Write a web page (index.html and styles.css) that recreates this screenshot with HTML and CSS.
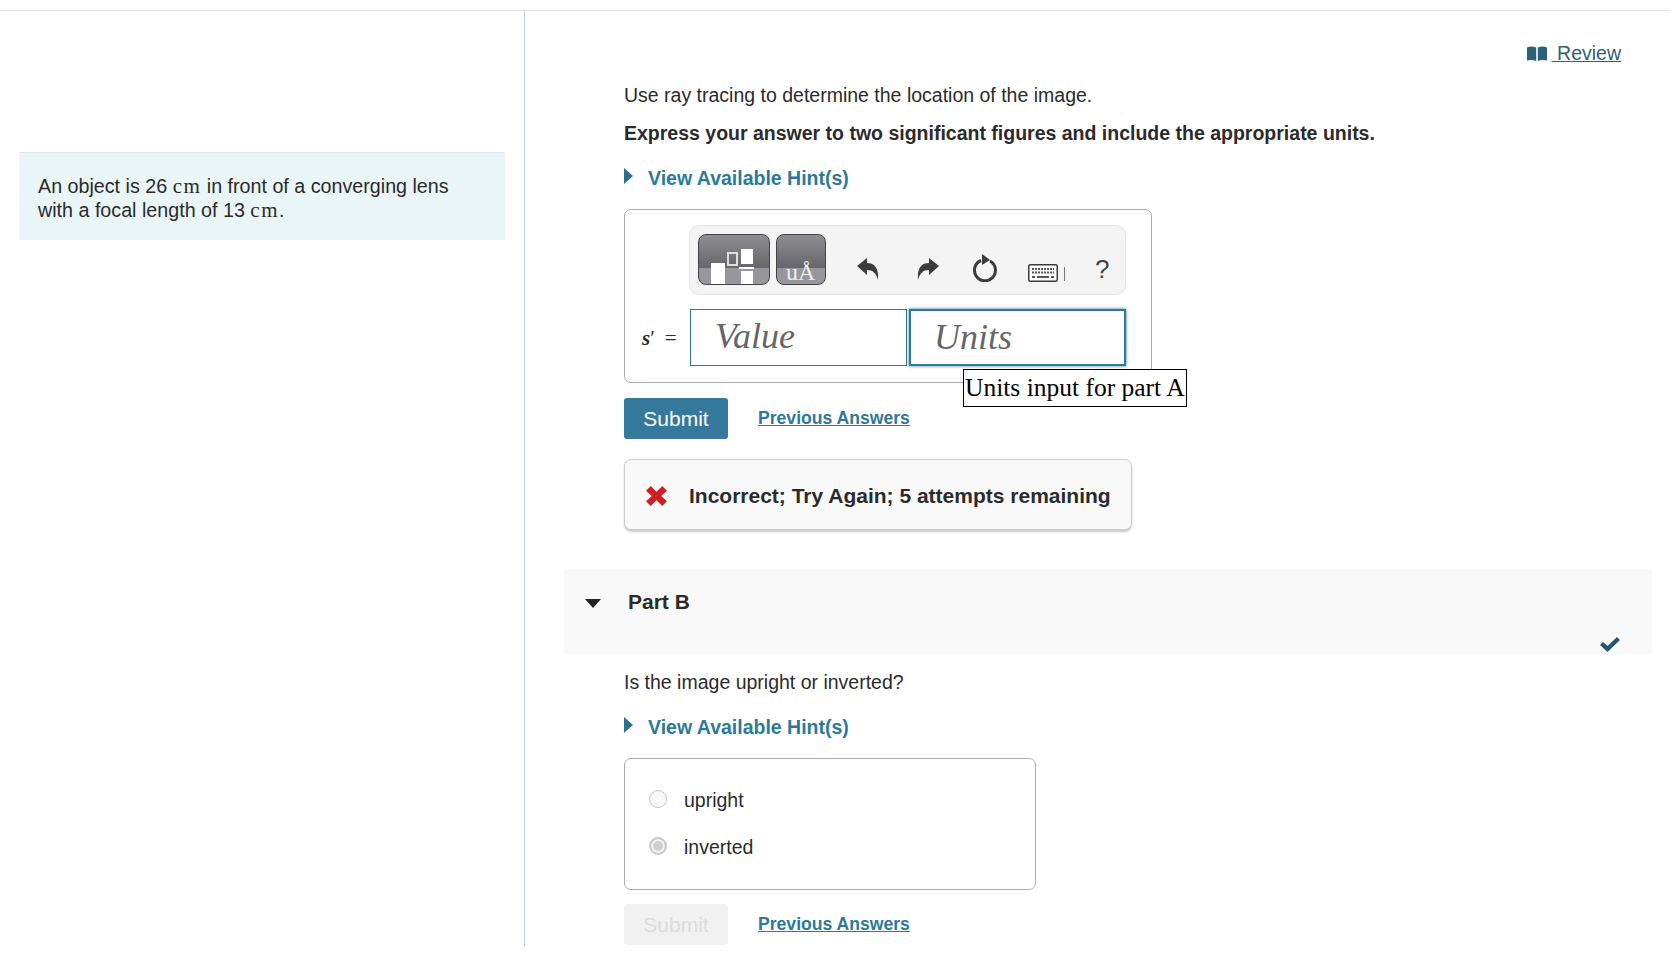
FILE: index.html
```html
<!DOCTYPE html>
<html lang="en">
<head>
    <meta charset="UTF-8">
    <title>Part A</title>
    <link rel="stylesheet" href="styles.css">
</head>
<body>
    <div class="layout">
        <aside class="side">
            <div class="intro">
                An object is 26 <span class="math">cm</span> in front of a converging lens<br>
                with a focal length of 13 <span class="math">cm</span>.
            </div>
        </aside>

        <main class="main">
            <div class="review-row">
                <a class="review" href="#">
                    <svg class="book" width="20" height="15" viewBox="0 0 20 15">
                        <path d="M0 1.5C3 .3 6 .3 9.2 1.5V15C6 13.6 3 13.6 0 14.5Z" fill="#2c6179"/>
                        <path d="M20 1.5C17 .3 14 .3 10.8 1.5V15C14 13.6 17 13.6 20 14.5Z" fill="#2c6179"/>
                    </svg>
                    <span class="review-text"> Review</span>
                </a>
            </div>

            <section class="part">
                <p class="line">Use ray tracing to determine the location of the image.</p>
                <p class="line bold">Express your answer to two significant figures and include the appropriate units.</p>
                <a class="hint" href="#"><span class="caret"></span>View Available Hint(s)</a>

                <div class="answer-box">
                    <div class="toolbar">
                        <span class="tool-btn tool-wide">
                            <svg width="72" height="50" viewBox="0 0 72 50">
                                <rect x="12" y="28" width="14" height="22" fill="#fff"/>
                                <rect x="29" y="18" width="9" height="12" fill="none" stroke="#ddd" stroke-width="2"/>
                                <rect x="42" y="14" width="12" height="15" fill="#fff"/>
                                <rect x="40" y="32" width="15" height="2" fill="#fff"/>
                                <rect x="42" y="36" width="12" height="14" fill="#fff"/>
                            </svg>
                        </span>
                        <span class="tool-btn tool-unit">
                            <span class="unit-text">uÅ</span>
                        </span>
                        <svg class="tool-icon undo" width="22" height="24" viewBox="0 0 22 24">
                            <path d="M0 9 10 1V6C17 6 22 10 21 23 19 16 16 13 10 13V18Z" fill="#3c3c3c"/>
                        </svg>
                        <svg class="tool-icon redo" width="22" height="24" viewBox="0 0 22 24">
                            <path d="M22 9 12 1V6C5 6 0 10 1 23 3 16 6 13 12 13V18Z" fill="#3c3c3c"/>
                        </svg>
                        <svg class="tool-icon reset" width="26" height="28" viewBox="0 0 26 28">
                            <path d="M9 6.5A10.5 10.5 0 1 0 18 7" fill="none" stroke="#3c3c3c" stroke-width="3"/>
                            <path d="M10 0 18 6 10 11Z" fill="#3c3c3c"/>
                        </svg>
                        <svg class="tool-icon keys" width="30" height="18" viewBox="0 0 30 18">
                            <rect x=".75" y=".75" width="28.5" height="16.5" rx="1.5" fill="#fff" stroke="#3c3c3c" stroke-width="1.5"/>
                            <path d="M4 5H26M4 8.5H26" stroke="#555" stroke-width="2" stroke-dasharray="2 1"/>
                            <path d="M4 13H7M9 13H21M23 13H26" stroke="#555" stroke-width="2"/>
                        </svg>
                        <span class="tool-sep"></span>
                        <span class="tool-help">?</span>
                    </div>

                    <div class="input-row">
                        <span class="eq-label"><i>s</i>′<span class="eq-sign">=</span></span>
                        <div class="field">Value</div>
                        <div class="field field-focus">Units</div>
                    </div>
                    <div class="tooltip">Units input for part A</div>
                </div>

                <div class="actions">
                    <button class="submit">Submit</button>
                    <a class="prev" href="#">Previous Answers</a>
                </div>

                <div class="feedback">
                    <svg width="21" height="20" viewBox="0 0 22 21">
                        <path d="M5 0 11 6 17 0 22 5 16 10.500 22 16 17 21 11 15 5 21 0 16 6 10.500 0 5Z" fill="#cd2026"/>
                    </svg>
                    <span>Incorrect; Try Again; 5 attempts remaining</span>
                </div>
            </section>

            <div class="part-head">
                <span class="arrow-down"></span>
                <span class="part-title">Part B</span>
                <svg class="check" width="20" height="15" viewBox="0 0 20 15">
                    <path d="M0 8 3 5 7.500 9 17 0 20 3 7.500 15Z" fill="#22576e"/>
                </svg>
            </div>

            <section class="part">
                <p class="line question">Is the image upright or inverted?</p>
                <a class="hint" href="#"><span class="caret"></span>View Available Hint(s)</a>

                <div class="choices">
                    <label class="choice"><span class="radio"></span>upright</label>
                    <label class="choice"><span class="radio radio-on"></span>inverted</label>
                </div>

                <div class="actions actions-b">
                    <button class="submit submit-off">Submit</button>
                    <a class="prev" href="#">Previous Answers</a>
                </div>
            </section>
        </main>
    </div>
</body>
</html>
```

FILE: styles.css
```css
html, body {
    margin: 0;
    padding: 0;
    background: #fff;
}
body {
    font-family: "Liberation Sans", Arial, sans-serif;
    font-size: 19.5px;
    color: #2b2b2b;
    height: 974px;
    overflow: hidden;
}
.layout {
    display: flex;
    height: 935px;
    margin-top: 10px;
    border-top: 1px solid #e2e2e2;
    overflow: hidden;
}
.side {
    width: 525px;
    flex: none;
    border-right: 1px solid #c5d0d6;
    padding: 141px 19px 0 19px;
    box-sizing: border-box;
}
.intro {
    background: #e9f5f7;
    border-top: 1px solid #dde6e8;
    padding: 21px 19px 18px;
    font-size: 19.7px;
    line-height: 24px;
    height: 88px;
    box-sizing: border-box;
    white-space: nowrap;
}
.math {
    font-family: "Liberation Serif", serif;
    font-size: 21px;
    letter-spacing: 1.5px;
}
.main {
    flex: 1;
    padding: 0 18px 0 39px;
    min-width: 0;
}
.review-row {
    display: flex;
    justify-content: flex-end;
    padding: 31px 31px 0 0;
    height: 41px;
}
.review {
    display: flex;
    align-items: center;
    height: 22px;
    color: #2c6179;
    text-decoration: none;
}
.book {
    margin-right: 5px;
}
.review-text {
    text-decoration: underline;
    white-space: pre;
}
.part {
    padding-left: 60px;
}
.line {
    margin: 0;
    line-height: 24px;
    height: 24px;
    margin-bottom: 14px;
    white-space: nowrap;
}
.bold {
    font-weight: bold;
    margin-bottom: 21px;
}
.hint {
    display: flex;
    align-items: center;
    font-weight: bold;
    color: #2b7a9a;
    text-decoration: none;
    height: 24px;
}
.caret {
    width: 0;
    height: 0;
    border-left: 9px solid #2d6f8c;
    border-top: 8px solid transparent;
    border-bottom: 8px solid transparent;
    margin-right: 15px;
    margin-top: -4px;
}
.answer-box {
    position: relative;
    width: 528px;
    height: 174px;
    margin-top: 19px;
    border: 1px solid #aaa;
    border-radius: 7px;
    box-sizing: border-box;
    padding: 15px 25px 0 64px;
}
.toolbar {
    display: flex;
    align-items: flex-start;
    height: 70px;
    box-sizing: border-box;
    background: #f4f4f4;
    border: 1px solid #e4e4e4;
    border-radius: 10px;
    padding: 8px 0 0 8px;
}
.tool-btn {
    display: block;
    position: relative;
    height: 51px;
    border: 1px solid #444;
    border-radius: 8px;
    box-sizing: border-box;
    background: linear-gradient(#8d8d92 0, #66666a 68%, #96969c 68%);
}
.tool-wide {
    width: 72px;
    margin-right: 6px;
    overflow: hidden;
}
.tool-wide svg {
    display: block;
}
.tool-unit {
    width: 50px;
}
.unit-text {
    position: absolute;
    left: 9px;
    bottom: 0;
    font-family: "Liberation Serif", serif;
    font-size: 24px;
    color: #eee;
    line-height: 24px;
}
.tool-icon {
    flex: none;
}
.undo {
    margin: 23px 0 0 31px;
}
.redo {
    margin: 23px 0 0 38px;
}
.reset {
    margin: 20px 0 0 33px;
}
.keys {
    margin: 30px 0 0 30px;
}
.tool-sep {
    width: 1px;
    height: 14px;
    margin: 33px 0 0 6px;
    background: #777;
}
.tool-help {
    margin: 20px 0 0 30px;
    font-size: 26px;
    line-height: 30px;
    color: #444;
}
.input-row {
    display: flex;
    align-items: center;
    position: relative;
    margin: 14px 0 0 1px;
}
.eq-label {
    position: absolute;
    left: -48px;
    margin-top: 2px;
    font-family: "Liberation Serif", serif;
    font-size: 21px;
    white-space: nowrap;
}
.eq-label i {
    font-weight: bold;
}
.eq-sign {
    margin-left: 10px;
}
.field {
    width: 217px;
    height: 57px;
    box-sizing: border-box;
    border: 1px solid #2f7a9b;
    padding-left: 24px;
    font-family: "Liberation Serif", serif;
    font-style: italic;
    font-size: 36px;
    line-height: 52px;
    color: #666;
    flex: none;
}
.field-focus {
    margin-left: 2px;
    border: 2px solid #2f7a9b;
    padding-left: 23px;
    box-shadow: 0 0 3px #2f7a9b;
}
.tooltip {
    position: absolute;
    left: 338px;
    top: 159px;
    border: 1px solid #000;
    background: #fff;
    color: #000;
    font-family: "Liberation Serif", serif;
    font-size: 25.5px;
    line-height: 36px;
    white-space: nowrap;
    padding: 0 1px;
}
.actions {
    display: flex;
    align-items: center;
    margin-top: 15px;
    height: 41px;
}
.submit {
    width: 104px;
    height: 41px;
    border: 0;
    border-radius: 3px;
    background: #35799c;
    color: #fff;
    font-family: "Liberation Sans", Arial, sans-serif;
    font-size: 21px;
    padding: 0;
}
.submit-off {
    background: #f1f1f1;
    color: #dcdcdc;
}
.prev {
    margin: -1px 0 0 30px;
    font-size: 17.6px;
    font-weight: bold;
    color: #2b7a9a;
}
.feedback {
    display: flex;
    align-items: center;
    width: 508px;
    height: 71px;
    margin-top: 20px;
    box-sizing: border-box;
    padding: 2px 0 0 21px;
    background: #f9f9f9;
    border: 1px solid #ccc;
    border-radius: 7px;
    box-shadow: 0 2px 2px #ccc;
    font-weight: bold;
    font-size: 21px;
    white-space: nowrap;
}
.feedback svg {
    margin-right: 22px;
    flex: none;
}
.part-head {
    position: relative;
    display: flex;
    align-items: center;
    height: 85px;
    margin-top: 39px;
    background: #f9f9f9;
    padding: 0 0 20px 21px;
    box-sizing: border-box;
    font-weight: bold;
}
.arrow-down {
    width: 0;
    height: 0;
    border-top: 9px solid #222;
    border-left: 8px solid transparent;
    border-right: 8px solid transparent;
    margin-right: 27px;
    margin-top: 3px;
}
.part-title {
    font-size: 21px;
}
.check {
    position: absolute;
    right: 32px;
    bottom: 2px;
}
.question {
    margin-top: 16px;
    margin-bottom: 21px;
}
.choices {
    width: 412px;
    height: 132px;
    margin-top: 19px;
    box-sizing: border-box;
    border: 1px solid #aaa;
    border-radius: 7px;
    padding: 18px 0 0 24px;
}
.choice {
    display: flex;
    align-items: center;
    height: 47px;
}
.radio {
    width: 18px;
    height: 18px;
    box-sizing: border-box;
    border: 1px solid #c8c8c8;
    border-radius: 50%;
    background: #f9f9f9;
    margin-right: 17px;
    margin-top: -3px;
}
.radio-on {
    border-width: 2px;
    box-shadow: inset 0 0 0 2px #f6f6f6;
    background: #cfcfcf;
}
.actions-b {
    margin-top: 14px;
}
.actions-b .prev {
    margin-top: 0;
}
```
